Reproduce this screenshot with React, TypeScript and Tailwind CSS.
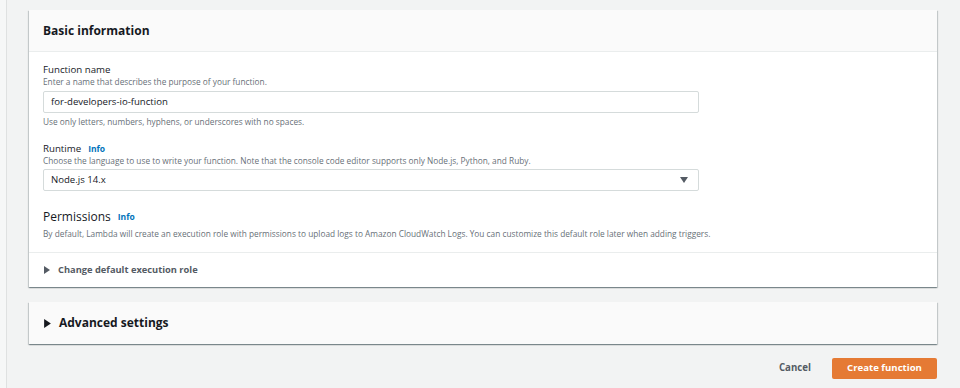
function Info() {
  return <span className="ml-[7px] text-[8.5px] font-bold text-[#0073bb]">Info</span>
}

function Caret({ size = 'sm' }: { size?: 'sm' | 'lg' }) {
  const cls = size === 'lg' ? 'h-[9px] w-[7px]' : 'h-[8px] w-[6px]'
  return (
    <svg viewBox="0 0 6 8" className={cls}>
      <path d="M0 0 L6 4 L0 8 Z" fill={size === 'lg' ? '#16191f' : '#545b64'} />
    </svg>
  )
}

const cardShadow =
  'shadow-[0_1px_1px_0_rgba(0,28,36,0.3),1px_1px_1px_0_rgba(0,28,36,0.15),-1px_1px_1px_0_rgba(0,28,36,0.15)]'

export default function App() {
  return (
    <div
      className="flex h-[388px] w-[960px] overflow-hidden bg-[#f2f3f3] text-[#16191f]"
      style={{ fontFamily: '"Open Sans", "Liberation Sans", sans-serif' }}
    >
      <div className="w-[7px] shrink-0 border-r border-[#dfe1e1] bg-[#f6f7f7]" />
      <div className="flex w-[930px] shrink-0 flex-col pt-[10px] pl-[22px]">
        <section className={`bg-white ${cardShadow}`}>
          <div className="flex h-[42px] items-center border-b border-[#eaeded] bg-[#fafafa] px-[14px]">
            <h2 className="text-[12px] font-bold leading-[16px]">Basic information</h2>
          </div>
          <div className="px-[14px] pt-[11px]">
            <div className="text-[9.7px] leading-[13px]">Function name</div>
            <div className="text-[8.3px] leading-[12px] text-[#687078]">
              Enter a name that describes the purpose of your function.
            </div>
            <div className="mt-[3px] flex h-[22px] w-[656px] items-center rounded-[2px] border border-[#d5dbdb] px-[7px] text-[9.6px]">
              for-developers-io-function
            </div>
            <div className="mt-[3px] text-[8.3px] leading-[12px] text-[#687078]">
              Use only letters, numbers, hyphens, or underscores with no spaces.
            </div>
            <div className="mt-[14px] flex items-center text-[9.7px] leading-[13px]">
              Runtime
              <Info />
            </div>
            <div className="text-[8.3px] leading-[12px] text-[#687078]">
              Choose the language to use to write your function. Note that the console code editor supports only
              Node.js, Python, and Ruby.
            </div>
            <div className="mt-[2px] flex h-[22px] w-[656px] items-center justify-between rounded-[2px] border border-[#d5dbdb] px-[7px] text-[9.6px]">
              <span>Node.js 14.x</span>
              <svg viewBox="0 0 8 6" className="mr-[3px] h-[6px] w-[8px]">
                <path d="M0 0 L8 0 L4 6 Z" fill="#545b64" />
              </svg>
            </div>
            <div className="mt-[18px] flex items-center text-[12px] leading-[16px]">
              Permissions
              <Info />
            </div>
            <div className="mt-[3px] text-[8.3px] leading-[12px] text-[#687078]">
              By default, Lambda will create an execution role with permissions to upload logs to Amazon CloudWatch
              Logs. You can customize this default role later when adding triggers.
            </div>
          </div>
          <div className="mt-[12px] flex h-[35px] items-center gap-[8px] border-t border-[#eaeded] px-[15px]">
            <Caret />
            <span className="text-[9.3px] font-bold text-[#545b64]">Change default execution role</span>
          </div>
        </section>

        <section className={`mt-[15px] flex h-[42px] items-center gap-[8px] bg-[#fafafa] px-[15px] ${cardShadow}`}>
          <Caret size="lg" />
          <span className="text-[12px] font-bold">Advanced settings</span>
        </section>

        <div className="mt-[14px] flex items-center justify-end gap-[21px]">
          <button className="text-[9.7px] font-bold text-[#545b64]">Cancel</button>
          <button className="flex h-[21px] w-[105px] items-center justify-center rounded-[2px] bg-[#e57a34] text-[9.6px] font-bold text-white">
            Create function
          </button>
        </div>
      </div>
    </div>
  )
}
